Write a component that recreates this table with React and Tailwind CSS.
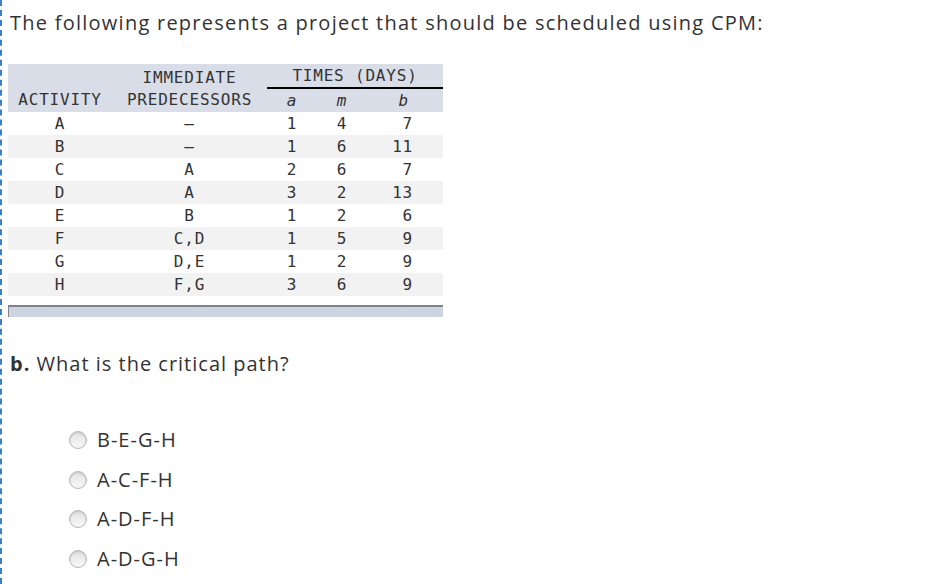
const rows = [
  ['A', '—', 1, 4, 7],
  ['B', '—', 1, 6, 11],
  ['C', 'A', 2, 6, 7],
  ['D', 'A', 3, 2, 13],
  ['E', 'B', 1, 2, 6],
  ['F', 'C,D', 1, 5, 9],
  ['G', 'D,E', 1, 2, 9],
  ['H', 'F,G', 3, 6, 9],
];

const options = ['B-E-G-H', 'A-C-F-H', 'A-D-F-H', 'A-D-G-H'];

export default function App() {
  return (
    // Page: question panel with dashed left rule
    <div className="w-[952px] h-[584px] bg-white border-l-2 border-dashed border-[#3b82c4] text-[#333] font-['Open_Sans',sans-serif] overflow-hidden">
      <p className="pt-[9px] pl-[8px] text-[20px] tracking-[1.25px] leading-[28px]">
        The following represents a project that should be scheduled using CPM:
      </p>

      {/* CPM table */}
      <div className="mt-[27px] ml-[6px] w-[435px]">
        <table className="w-full border-collapse text-[16px] leading-[20px] tracking-[0.8px] font-['DejaVu_Sans_Mono',monospace]">
          <thead className="bg-[#d9dde8]">
            <tr className="h-[24px]">
              <th className="w-[104px] font-normal"></th>
              <th className="w-[155px] font-normal pt-[4px]">IMMEDIATE</th>
              <th colSpan={3} className="font-normal pt-[1px] border-b-2 border-black">TIMES (DAYS)</th>
            </tr>
            <tr className="h-[24px]">
              <th className="font-normal">ACTIVITY</th>
              <th className="font-normal">PREDECESSORS</th>
              <th className="w-[50px] font-normal italic">a</th>
              <th className="w-[50px] font-normal italic">m</th>
              <th className="font-normal italic text-right pr-[34px]">b</th>
            </tr>
          </thead>
          <tbody>
            {rows.map((r, i) => (
              <tr key={r[0]} className={`h-[23px] ${i % 2 ? 'bg-[#f2f2f2]' : 'bg-white'}`}>
                <td className="text-center">{r[0]}</td>
                <td className="text-center">{r[1]}</td>
                <td className="text-center">{r[2]}</td>
                <td className="text-center">{r[3]}</td>
                <td className="text-right pr-[30px]">{r[4]}</td>
              </tr>
            ))}
          </tbody>
        </table>
        <div className="mt-[9px] h-[12px] bg-[#cdd3df] border-t-2 border-l border-[#7f8389]"></div>
      </div>

      <p className="mt-[33px] pl-[8px] text-[20px] tracking-[1px] leading-[28px]">
        <span className="font-bold">b.</span> What is the critical path?
      </p>

      {/* Answer choices */}
      <div className="mt-[48px] pl-[67px] flex flex-col gap-[11.5px]">
        {options.map((o) => (
          <label key={o} className="flex items-center h-[28px] text-[20px] tracking-[1px]">
            <span className="w-[18px] h-[18px] rounded-full border border-[#b5b5b5] bg-gradient-to-b from-[#e2e2e2] to-[#f8f8f8] shadow-[inset_0_1px_2px_rgba(0,0,0,0.15)]"></span>
            <span className="ml-[10px]">{o}</span>
          </label>
        ))}
      </div>
    </div>
  );
}
